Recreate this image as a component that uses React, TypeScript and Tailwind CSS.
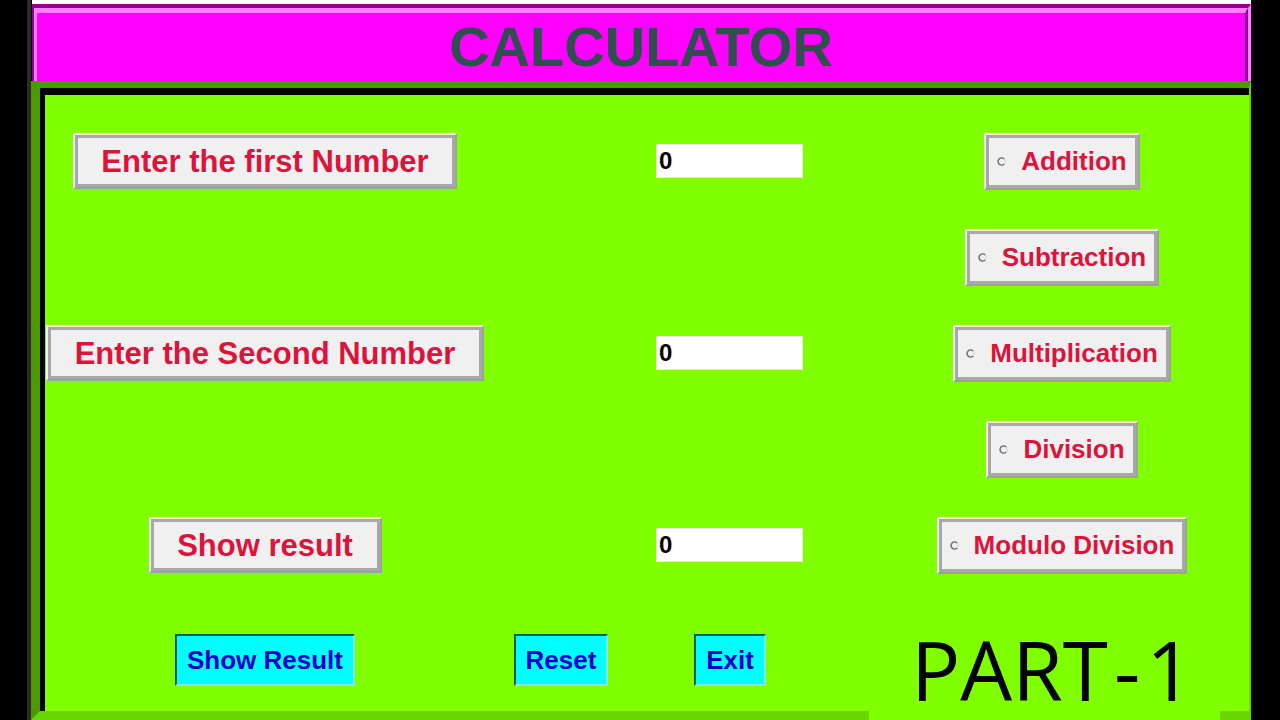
import React from "react";

const sans = { fontFamily: '"Liberation Sans", Arial, sans-serif' };

function RaisedBox({ className, children }: { className?: string; children: React.ReactNode }) {
  return (
    <div className="border-2 border-t-[#f2f2f2] border-l-[#f2f2f2] border-b-[#a0a0a0] border-r-[#a0a0a0]">
      <div className={`flex items-center border-[3px] border-[#a8a8a8] bg-[#f0f0f0] ${className ?? ""}`}>{children}</div>
    </div>
  );
}

function FieldLabel({ text, width }: { text: string; width: string }) {
  return (
    <RaisedBox className={`${width} h-[52px] justify-center`}>
      <span className="text-[31px] font-bold leading-none text-[#dc143c]">{text}</span>
    </RaisedBox>
  );
}

function RadioDot() {
  return (
    <svg width="9" height="9" viewBox="0 0 9 9" className="shrink-0">
      <path d="M7.2 2 A3.6 3.6 0 1 0 7.2 7" fill="none" stroke="#6a6a6a" strokeWidth="1.4" />
      <path d="M7.2 2 A3.6 3.6 0 0 1 7.2 7" fill="none" stroke="#dcdcdc" strokeWidth="1.4" />
    </svg>
  );
}

function RadioOption({ text }: { text: string }) {
  return (
    <div className="justify-self-center">
      <RaisedBox className="h-[53px] gap-[15px] px-2">
        <RadioDot />
        <span className="text-[26px] font-bold leading-none text-[#dc143c]">{text}</span>
      </RaisedBox>
    </div>
  );
}

function Entry() {
  return (
    <div className="ml-[171px] flex h-[34px] w-[147px] items-center border border-[#e8e8e8] bg-white pl-[2px]">
      <span className="text-[24px] font-bold leading-none text-black">0</span>
    </div>
  );
}

function ActionButton({ text, width }: { text: string; width: string }) {
  return (
    <div
      className={`${width} flex h-[52px] items-center justify-center border-2 border-t-[#0b5d5d] border-l-[#0b5d5d] border-b-[#7fe8e8] border-r-[#7fe8e8] bg-[#00ffff]`}
    >
      <span className="text-[26px] font-bold leading-none text-[#0000cd]">{text}</span>
    </div>
  );
}

export default function App() {
  return (
    <div className="relative flex h-[720px] w-[1280px] overflow-hidden bg-black" style={sans}>
      <div className="w-[27px] shrink-0" />
      <div className="w-[4px] shrink-0 bg-[#2b2b2b]" />

      <div className="flex w-[1220px] shrink-0 flex-col">
        <div className="ml-[1px] h-[4px] bg-white" />

        <div className="ml-[1px] h-[77px] border-t-4 border-l-2 border-r-[3px] border-t-[#900090] border-l-[#900090] border-r-[#ff80ff]">
          <div className="flex h-full items-center justify-center border-t-[5px] border-l-[3px] border-r-[3px] border-t-[#ff80ff] border-l-[#ff80ff] border-r-[#900090] bg-[#ff00ff]">
            <h1 className="text-[56px] font-bold leading-none text-[#2f4f4f]">CALCULATOR</h1>
          </div>
        </div>

        <div className="h-[639px] border-t-[7px] border-l-[9px] border-b-[9px] border-r-2 border-t-[#4c9a00] border-l-[#4c9a00] border-b-[#6ad600] border-r-[#6ad600]">
          <div className="h-full border-t-[7px] border-l-[5px] border-black bg-[#80ff00] pt-[18px]">
            <div className="grid grid-cols-[440px_451px_252px] grid-rows-[repeat(5,96px)] items-center">
              <div className="justify-self-center">
                <FieldLabel text="Enter the first Number" width="w-[380px]" />
              </div>
              <Entry />
              <RadioOption text="Addition" />

              <div />
              <div />
              <RadioOption text="Subtraction" />

              <div className="justify-self-center">
                <FieldLabel text="Enter the Second Number" width="w-[434px]" />
              </div>
              <Entry />
              <RadioOption text="Multiplication" />

              <div />
              <div />
              <RadioOption text="Division" />

              <div className="justify-self-center">
                <FieldLabel text="Show result" width="w-[229px]" />
              </div>
              <Entry />
              <RadioOption text="Modulo Division" />
            </div>

            <div className="mt-[41px] flex items-center pl-[130px]">
              <ActionButton text="Show Result" width="w-[180px]" />
              <div className="ml-[159px]">
                <ActionButton text="Reset" width="w-[94px]" />
              </div>
              <div className="ml-[86px]">
                <ActionButton text="Exit" width="w-[72px]" />
              </div>
            </div>
          </div>
        </div>
      </div>

      <div className="absolute left-[869px] top-[618px] h-[102px] w-[351px] bg-[#80ff00] pl-[42px] pt-[10px]">
        <div
          className="text-[82px] leading-none font-normal text-black"
          style={{ fontFamily: '"Open Sans", "Noto Sans", sans-serif' }}
        >
          PART<span className="mx-[6px]">-</span>1
        </div>
      </div>
    </div>
  );
}
